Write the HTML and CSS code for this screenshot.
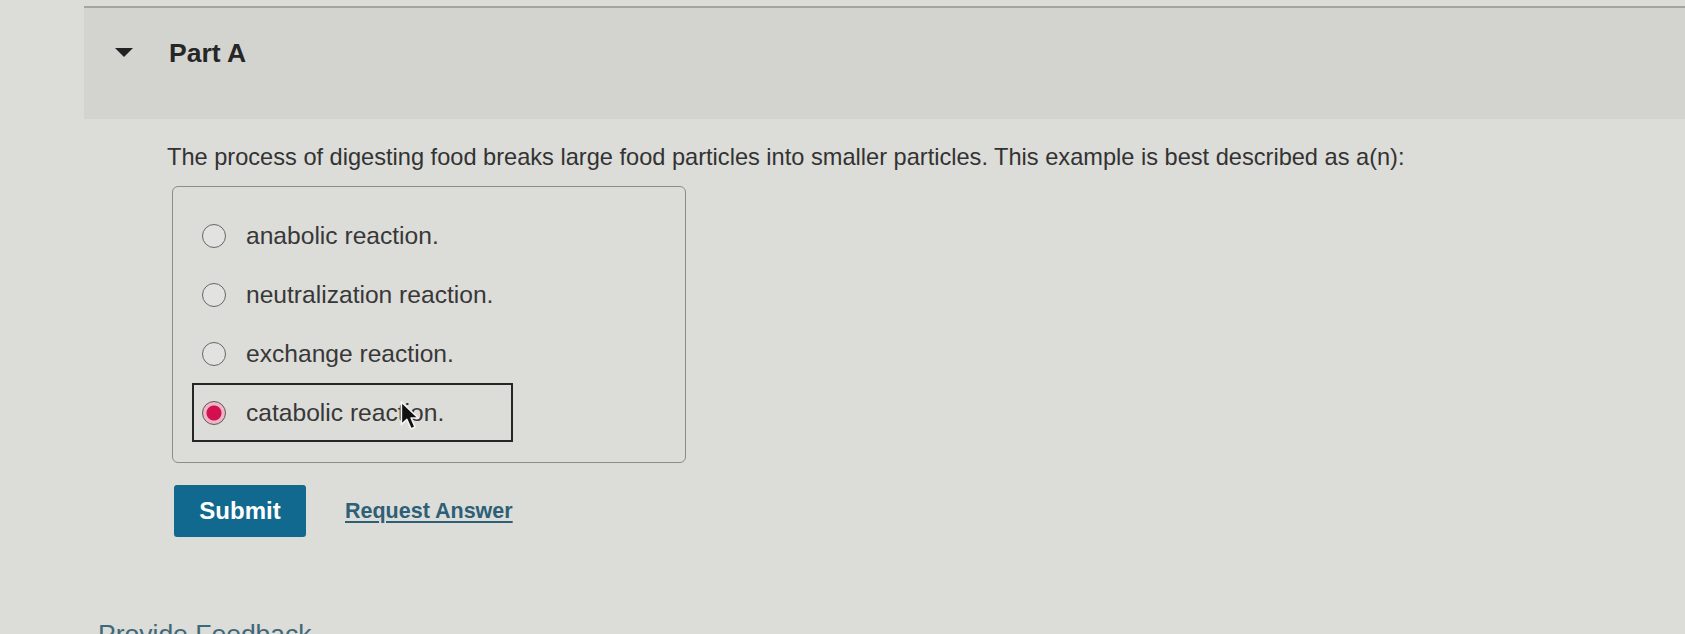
FILE: index.html
```html
<!DOCTYPE html>
<html lang="en">
<head>
<meta charset="utf-8">
<title>Part A</title>
<link rel="stylesheet" href="styles.css">
</head>
<body>
<div class="page">
  <section class="part">
    <header class="part-header">
      <span class="caret"></span>
      <h2 class="part-title">Part A</h2>
    </header>
    <div class="part-body">
      <p class="question">The process of digesting food breaks large food particles into smaller particles. This example is best described as a(n):</p>
      <div class="choices">
        <label class="choice"><span class="radio"></span><span class="choice-text">anabolic reaction.</span></label>
        <label class="choice"><span class="radio"></span><span class="choice-text">neutralization reaction.</span></label>
        <label class="choice"><span class="radio"></span><span class="choice-text">exchange reaction.</span></label>
        <label class="choice selected"><span class="radio checked"></span><span class="choice-text">catabolic reaction.</span>
          <svg class="cursor" width="22" height="32" viewBox="0 0 17 26"><path d="M1.5 1.5 L1.5 20 L6 15.8 L9.3 23.5 L12.6 22 L9.4 14.6 L15.2 14.6 Z" fill="#111" stroke="#f4f4f4" stroke-width="1.3" stroke-linejoin="round"/></svg>
        </label>
      </div>
      <div class="actions">
        <button class="submit" type="button">Submit</button>
        <a class="request" href="#">Request Answer</a>
      </div>
    </div>
    <a class="feedback" href="#">Provide Feedback</a>
  </section>
</div>
</body>
</html>
```
FILE: styles.css
```css
html, body {
  margin: 0;
  padding: 0;
}
body {
  background: #dcdcd9;
  font-family: "Liberation Sans", Arial, Helvetica, sans-serif;
  color: #333;
  width: 1685px;
  height: 634px;
  overflow: hidden;
}
.page {
  padding-top: 6px;
}
.part {
  margin-left: 84px;
}
.part-header {
  border-top: 2px solid #a4a4a2;
  background: #d3d3d0;
  height: 113px;
  box-sizing: border-box;
  display: flex;
  align-items: center;
  padding: 0 0 22px 31px;
}
.caret {
  width: 0;
  height: 0;
  border-left: 9px solid transparent;
  border-right: 9px solid transparent;
  border-top: 9px solid #222;
  margin-right: 36px;
}
.part-title {
  margin: 0;
  font-size: 26.5px;
  line-height: 30px;
  font-weight: bold;
  color: #262626;
}
.part-body {
  padding-left: 83px;
}
.question {
  margin: 24px 0 0 0;
  font-size: 23.6px;
  line-height: 28px;
  color: #333;
}
.choices {
  margin-top: 15px;
  margin-left: 5px;
  width: 514px;
  height: 277px;
  box-sizing: border-box;
  border: 1px solid #8c8c8a;
  border-radius: 6px;
  padding: 19px 0 20px 19px;
  display: flex;
  flex-direction: column;
}
.choice {
  position: relative;
  width: 321px;
  height: 59px;
  box-sizing: border-box;
  border: 2px solid transparent;
  display: flex;
  align-items: center;
  padding-left: 8px;
  font-size: 24.6px;
  color: #383838;
}
.choice.selected {
  border-color: #262626;
}
.radio {
  width: 24px;
  height: 24px;
  box-sizing: border-box;
  border: 1.5px solid #666;
  border-radius: 50%;
  background: #e2e2e0;
  margin-right: 20px;
  flex: none;
}
.radio.checked {
  border-color: #5a5a5a;
  background: radial-gradient(circle, #d3104f 0 7px, #f0b3c8 8px);
}
.cursor {
  position: absolute;
  left: 205px;
  top: 15px;
}
.actions {
  margin-top: 22px;
  margin-left: 7px;
  display: flex;
  align-items: center;
}
.submit {
  width: 132px;
  height: 52px;
  border: none;
  border-radius: 3px;
  background: #12698f;
  color: #fff;
  font-family: "Liberation Sans", Arial, Helvetica, sans-serif;
  font-size: 24px;
  font-weight: bold;
  padding: 0;
  margin-right: 39px;
}
.request {
  font-size: 21.5px;
  font-weight: bold;
  color: #2d5f77;
  text-decoration: underline;
  text-underline-offset: 3px;
}
.feedback {
  display: block;
  margin-top: 82px;
  margin-left: 14px;
  font-size: 26.5px;
  line-height: 30px;
  color: #3f6878;
  text-decoration: none;
}
```
